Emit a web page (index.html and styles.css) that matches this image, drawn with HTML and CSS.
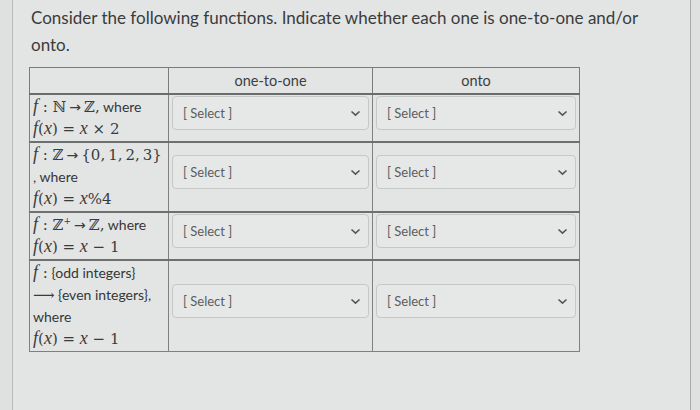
FILE: index.html
```html
<!DOCTYPE html>
<html lang="en">
<head>
  <meta charset="UTF-8" />
  <title>Functions - one-to-one / onto</title>
  <link rel="stylesheet" href="styles.css">
</head>
<body>
  <div class="page">
    <p class="prompt">Consider the following functions. Indicate whether each one is one-to-one and/or onto.</p>

    <table class="answers">
      <colgroup>
        <col class="c-fn">
        <col class="c-one">
        <col class="c-onto">
      </colgroup>
      <thead>
        <tr><th></th><th>one-to-one</th><th>onto</th></tr>
      </thead>
      <tbody>
        <tr>
          <td class="fn">
            <div class="ln"><span class="math"><i>f</i> : ℕ<span class="ar">→</span>ℤ,</span> where</div>
            <div class="ln"><span class="math"><i>f</i>(<i>x</i>) = <i>x</i> × 2</span></div>
          </td>
          <td><div class="select"><span>[ Select ]</span><svg width="11" height="7" viewBox="0 0 11 7"><path d="M1.5 1.5 L5.5 5.2 L9.5 1.5" fill="none" stroke="#555" stroke-width="1.6"/></svg></div></td>
          <td><div class="select"><span>[ Select ]</span><svg width="11" height="7" viewBox="0 0 11 7"><path d="M1.5 1.5 L5.5 5.2 L9.5 1.5" fill="none" stroke="#555" stroke-width="1.6"/></svg></div></td>
        </tr>
        <tr>
          <td class="fn">
            <div class="ln"><span class="math"><i>f</i> : ℤ<span class="ar">→</span>{0,&thinsp;1,&thinsp;2,&thinsp;3}</span></div>
            <div class="ln">, where</div>
            <div class="ln"><span class="math"><i>f</i>(<i>x</i>) = <i>x</i>%4</span></div>
          </td>
          <td><div class="select"><span>[ Select ]</span><svg width="11" height="7" viewBox="0 0 11 7"><path d="M1.5 1.5 L5.5 5.2 L9.5 1.5" fill="none" stroke="#555" stroke-width="1.6"/></svg></div></td>
          <td><div class="select"><span>[ Select ]</span><svg width="11" height="7" viewBox="0 0 11 7"><path d="M1.5 1.5 L5.5 5.2 L9.5 1.5" fill="none" stroke="#555" stroke-width="1.6"/></svg></div></td>
        </tr>
        <tr>
          <td class="fn">
            <div class="ln"><span class="math"><i>f</i> : ℤ<sup>+</sup><span class="ar">→</span>ℤ,</span> where</div>
            <div class="ln"><span class="math"><i>f</i>(<i>x</i>) = <i>x</i> − 1</span></div>
          </td>
          <td><div class="select"><span>[ Select ]</span><svg width="11" height="7" viewBox="0 0 11 7"><path d="M1.5 1.5 L5.5 5.2 L9.5 1.5" fill="none" stroke="#555" stroke-width="1.6"/></svg></div></td>
          <td><div class="select"><span>[ Select ]</span><svg width="11" height="7" viewBox="0 0 11 7"><path d="M1.5 1.5 L5.5 5.2 L9.5 1.5" fill="none" stroke="#555" stroke-width="1.6"/></svg></div></td>
        </tr>
        <tr>
          <td class="fn">
            <div class="ln"><span class="math"><i>f</i> :</span> {odd integers}</div>
            <div class="ln"><span class="math">⟶</span> {even integers},</div>
            <div class="ln">where</div>
            <div class="ln"><span class="math"><i>f</i>(<i>x</i>) = <i>x</i> − 1</span></div>
          </td>
          <td><div class="select"><span>[ Select ]</span><svg width="11" height="7" viewBox="0 0 11 7"><path d="M1.5 1.5 L5.5 5.2 L9.5 1.5" fill="none" stroke="#555" stroke-width="1.6"/></svg></div></td>
          <td><div class="select"><span>[ Select ]</span><svg width="11" height="7" viewBox="0 0 11 7"><path d="M1.5 1.5 L5.5 5.2 L9.5 1.5" fill="none" stroke="#555" stroke-width="1.6"/></svg></div></td>
        </tr>
      </tbody>
    </table>
  </div>
</body>
</html>
```

FILE: styles.css
```css
body {
  margin: 0;
  background-color: #dfe1e1;
  font-family: Lato, 'Liberation Sans', sans-serif;
  color: #363838;
  overflow: hidden;
}

.page {
  box-sizing: border-box;
  margin-left: 12px;
  width: 679px;
  min-height: 410px;
  padding: 4px 24px 0 16px;
  background-color: #e3e5e5;
  border-left: 1px solid #b9bbbb;
  border-right: 1px solid #a9abab;
}

.prompt {
  margin: 0 0 0 2px;
  font-size: 17px;
  line-height: 27px;
  color: #3a3c3c;
}

.answers {
  margin-top: 9px;
  width: 550px;
  border-collapse: collapse;
  table-layout: fixed;
  border: 1px solid #6f7171;
}

.c-fn { width: 139px; }
.c-one { width: 204px; }
.c-onto { width: 207px; }

.answers th {
  height: 25px;
  padding: 0;
  font-size: 14.5px;
  font-weight: normal;
  color: #3d3f3f;
  border: 1px solid #7a7c7c;
  border-bottom: 2px solid #6a6c6c;
}

.answers td {
  padding: 1px 3px;
  vertical-align: middle;
  border: 1px solid #7f8181;
}

.answers tbody tr + tr td {
  border-top: 2px solid #6e7070;
}

.fn {
  font-size: 14px;
  line-height: 22px;
  color: #353737;
}

.ln {
  height: 22px;
  white-space: nowrap;
}

.math {
  font-family: 'DejaVu Serif', 'Liberation Serif', serif;
  font-size: 15px;
  line-height: 1;
  color: #3a3c3c;
}

.math i {
  font-family: 'Liberation Serif', serif;
  font-size: 18px;
  font-style: italic;
}

.math .ar {
  font-family: 'DejaVu Sans', sans-serif;
  font-size: 14px;
  margin: 0 3px;
}

.math sup {
  font-size: 9px;
  line-height: 0;
}

.select {
  box-sizing: border-box;
  height: 34px;
  margin-bottom: 10px;
  padding: 0 7px 0 10px;
  display: flex;
  align-items: center;
  justify-content: space-between;
  background-color: #e6e8e8;
  border: 1px solid #c6c8c8;
  border-radius: 4px;
  font-size: 13px;
  color: #5b5d5d;
}
```
